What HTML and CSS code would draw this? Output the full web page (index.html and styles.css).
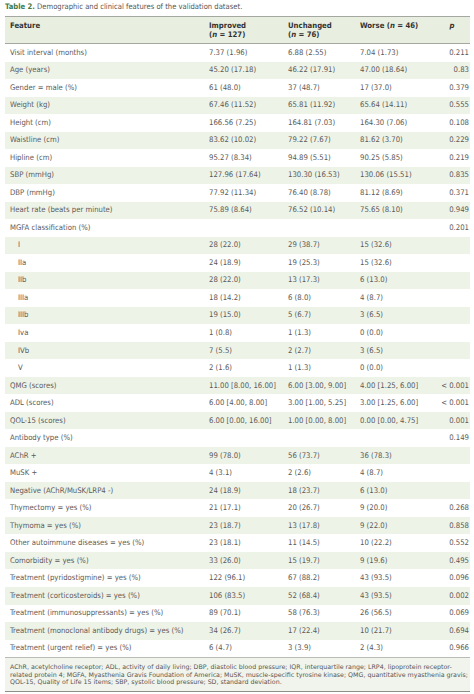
FILE: index.html
```html
<!DOCTYPE html>
<html>
<head>
<meta charset="utf-8">
<link rel="stylesheet" href="styles.css">
</head>
<body>
<div class="page">
  <div class="caption"><span class="label">Table 2.</span> Demographic and clinical features of the validation dataset.</div>
  <table class="data">
    <colgroup>
      <col class="c-feat"><col class="c-imp"><col class="c-unc"><col class="c-wor"><col class="c-p">
    </colgroup>
    <thead>
      <tr>
        <th>Feature</th>
        <th>Improved<br>(<i>n</i> = 127)</th>
        <th>Unchanged<br>(<i>n</i> = 76)</th>
        <th>Worse (<i>n</i> = 46)</th>
        <th class="ph"><i>p</i></th>
      </tr>
    </thead>
    <tbody>
      <tr><td>Visit interval (months)</td><td>7.37 (1.96)</td><td>6.88 (2.55)</td><td>7.04 (1.73)</td><td class="p">0.211</td></tr>
      <tr><td>Age (years)</td><td>45.20 (17.18)</td><td>46.22 (17.91)</td><td>47.00 (18.64)</td><td class="p">0.83</td></tr>
      <tr><td>Gender = male (%)</td><td>61 (48.0)</td><td>37 (48.7)</td><td>17 (37.0)</td><td class="p">0.379</td></tr>
      <tr><td>Weight (kg)</td><td>67.46 (11.52)</td><td>65.81 (11.92)</td><td>65.64 (14.11)</td><td class="p">0.555</td></tr>
      <tr><td>Height (cm)</td><td>166.56 (7.25)</td><td>164.81 (7.03)</td><td>164.30 (7.06)</td><td class="p">0.108</td></tr>
      <tr><td>Waistline (cm)</td><td>83.62 (10.02)</td><td>79.22 (7.67)</td><td>81.62 (3.70)</td><td class="p">0.229</td></tr>
      <tr><td>Hipline (cm)</td><td>95.27 (8.34)</td><td>94.89 (5.51)</td><td>90.25 (5.85)</td><td class="p">0.219</td></tr>
      <tr><td>SBP (mmHg)</td><td>127.96 (17.64)</td><td>130.30 (16.53)</td><td>130.06 (15.51)</td><td class="p">0.835</td></tr>
      <tr><td>DBP (mmHg)</td><td>77.92 (11.34)</td><td>76.40 (8.78)</td><td>81.12 (8.69)</td><td class="p">0.371</td></tr>
      <tr><td>Heart rate (beats per minute)</td><td>75.89 (8.64)</td><td>76.52 (10.14)</td><td>75.65 (8.10)</td><td class="p">0.949</td></tr>
      <tr><td>MGFA classification (%)</td><td></td><td></td><td></td><td class="p">0.201</td></tr>
      <tr><td class="sub">I</td><td>28 (22.0)</td><td>29 (38.7)</td><td>15 (32.6)</td><td class="p"></td></tr>
      <tr><td class="sub">IIa</td><td>24 (18.9)</td><td>19 (25.3)</td><td>15 (32.6)</td><td class="p"></td></tr>
      <tr><td class="sub">IIb</td><td>28 (22.0)</td><td>13 (17.3)</td><td>6 (13.0)</td><td class="p"></td></tr>
      <tr><td class="sub">IIIa</td><td>18 (14.2)</td><td>6 (8.0)</td><td>4 (8.7)</td><td class="p"></td></tr>
      <tr><td class="sub">IIIb</td><td>19 (15.0)</td><td>5 (6.7)</td><td>3 (6.5)</td><td class="p"></td></tr>
      <tr><td class="sub">Iva</td><td>1 (0.8)</td><td>1 (1.3)</td><td>0 (0.0)</td><td class="p"></td></tr>
      <tr><td class="sub">IVb</td><td>7 (5.5)</td><td>2 (2.7)</td><td>3 (6.5)</td><td class="p"></td></tr>
      <tr><td class="sub">V</td><td>2 (1.6)</td><td>1 (1.3)</td><td>0 (0.0)</td><td class="p"></td></tr>
      <tr><td>QMG (scores)</td><td>11.00 [8.00, 16.00]</td><td>6.00 [3.00, 9.00]</td><td>4.00 [1.25, 6.00]</td><td class="p">&lt; 0.001</td></tr>
      <tr><td>ADL (scores)</td><td>6.00 [4.00, 8.00]</td><td>3.00 [1.00, 5.25]</td><td>3.00 [1.25, 6.00]</td><td class="p">&lt; 0.001</td></tr>
      <tr><td>QOL-15 (scores)</td><td>6.00 [0.00, 16.00]</td><td>1.00 [0.00, 8.00]</td><td>0.00 [0.00, 4.75]</td><td class="p">0.001</td></tr>
      <tr><td>Antibody type (%)</td><td></td><td></td><td></td><td class="p">0.149</td></tr>
      <tr><td>AChR +</td><td>99 (78.0)</td><td>56 (73.7)</td><td>36 (78.3)</td><td class="p"></td></tr>
      <tr><td>MuSK +</td><td>4 (3.1)</td><td>2 (2.6)</td><td>4 (8.7)</td><td class="p"></td></tr>
      <tr><td>Negative (AChR/MuSK/LRP4 -)</td><td>24 (18.9)</td><td>18 (23.7)</td><td>6 (13.0)</td><td class="p"></td></tr>
      <tr><td>Thymectomy = yes (%)</td><td>21 (17.1)</td><td>20 (26.7)</td><td>9 (20.0)</td><td class="p">0.268</td></tr>
      <tr><td>Thymoma = yes (%)</td><td>23 (18.7)</td><td>13 (17.8)</td><td>9 (22.0)</td><td class="p">0.858</td></tr>
      <tr><td>Other autoimmune diseases = yes (%)</td><td>23 (18.1)</td><td>11 (14.5)</td><td>10 (22.2)</td><td class="p">0.552</td></tr>
      <tr><td>Comorbidity = yes (%)</td><td>33 (26.0)</td><td>15 (19.7)</td><td>9 (19.6)</td><td class="p">0.495</td></tr>
      <tr><td>Treatment (pyridostigmine) = yes (%)</td><td>122 (96.1)</td><td>67 (88.2)</td><td>43 (93.5)</td><td class="p">0.096</td></tr>
      <tr><td>Treatment (corticosteroids) = yes (%)</td><td>106 (83.5)</td><td>52 (68.4)</td><td>43 (93.5)</td><td class="p">0.002</td></tr>
      <tr><td>Treatment (immunosuppressants) = yes (%)</td><td>89 (70.1)</td><td>58 (76.3)</td><td>26 (56.5)</td><td class="p">0.069</td></tr>
      <tr><td>Treatment (monoclonal antibody drugs) = yes (%)</td><td>34 (26.7)</td><td>17 (22.4)</td><td>10 (21.7)</td><td class="p">0.694</td></tr>
      <tr><td>Treatment (urgent relief) = yes (%)</td><td>6 (4.7)</td><td>3 (3.9)</td><td>2 (4.3)</td><td class="p">0.966</td></tr>
    </tbody>
  </table>
  <div class="notes">AChR, acetylcholine receptor; ADL, activity of daily living; DBP, diastolic blood pressure; IQR, interquartile range; LRP4, lipoprotein receptor-<br>related protein 4; MGFA, Myasthenia Gravis Foundation of America; MuSK, muscle-specific tyrosine kinase; QMG, quantitative myasthenia gravis;<br>QOL-15, Quality of Life 15 items; SBP, systolic blood pressure; SD, standard deviation.</div>
</div>
</body>
</html>
```

FILE: styles.css
```css
html, body {
  margin: 0;
  padding: 0;
  background: #ffffff;
}
.page {
  width: 465px;
  margin-left: 5px;
  padding-top: 2px;
  font-family: "DejaVu Sans Condensed", "Liberation Sans", sans-serif;
  color: #5a5a5a;
}
.caption {
  font-size: 7.6px;
  line-height: 10px;
  height: 14px;
  color: #555;
}
.caption .label {
  color: #3f7a4e;
  font-weight: bold;
}
.data {
  width: 465px;
  border-collapse: collapse;
  table-layout: fixed;
  font-size: 7.7px;
}
.c-feat { width: 198px; }
.c-imp { width: 79px; }
.c-unc { width: 72px; }
.c-wor { width: 76px; }
.c-p { width: 40px; }
.data thead tr {
  background: #e9efe0;
  border-top: 1px solid #a4a8a0;
  border-bottom: 1px solid #a4a8a0;
}
.data th {
  text-align: left;
  vertical-align: top;
  font-weight: bold;
  color: #333;
  padding: 4px 0 3px 6px;
  line-height: 9px;
  height: 19px;
}
.data th:first-child { padding-left: 5px; }
.data th.ph { text-align: center; padding-left: 4px; }
.data td {
  height: 17.53px;
  padding: 0 0 0 6px;
  vertical-align: middle;
  white-space: nowrap;
  line-height: 10px;
}
.data td:first-child { padding-left: 5px; }
.data td.sub { padding-left: 13px; }
.data td.p { text-align: right; padding: 0 1px 0 0; }
.data tbody tr:nth-child(even) { background: #eef3e8; }
.notes {
  border-top: 1px solid #b8bcb4;
  border-bottom: 1px solid #8d918a;
  background: #f1f4ec;
  font-family: "DejaVu Sans", "Liberation Sans", sans-serif;
  font-size: 6.3px;
  line-height: 7.6px;
  padding: 5px 4px 5px 5px;
  white-space: nowrap;
  color: #555;
}
```
